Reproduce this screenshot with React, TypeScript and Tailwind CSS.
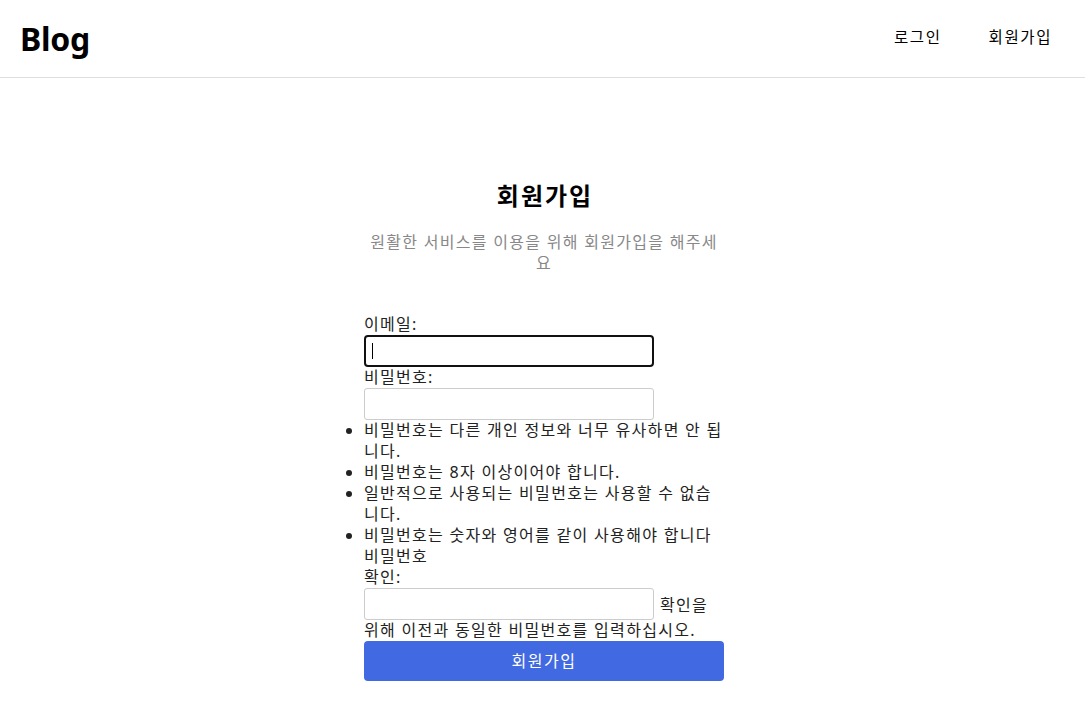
import React from "react";

const font = { fontFamily: '"Noto Sans", "Noto Sans CJK KR", sans-serif' };

export default function App() {
  return (
    <div className="min-h-screen bg-white text-black" style={font}>
      <header className="flex h-[78px] items-center justify-between border-b border-[#dedede] pl-5 pr-[33px]">
        <h1 className="text-[32px] font-bold leading-none tracking-[-0.3px]">Blog</h1>
        <nav className="-mt-[2px] flex gap-[47px] text-[15.5px] leading-[21px] tracking-[1.6px]">
          <a href="#">로그인</a>
          <a href="#">회원가입</a>
        </nav>
      </header>

      <main className="flex justify-center pt-[102px]">
        <div className="ml-[3px] w-[360px]">
          <h2 className="pl-[2px] text-center text-[24px] font-bold leading-[32px] tracking-[2px]">회원가입</h2>
          <p className="mt-[20px] text-center text-[16px] leading-[21px] tracking-[1.3px] text-[#888]">
            원활한 서비스를 이용을 위해 회원가입을 해주세
            <br />요
          </p>

          <form className="mt-[40px] text-[16px] leading-[21px] tracking-[1.3px] text-[#222]">
            <label className="block" htmlFor="email">이메일:</label>
            <div className="relative h-[32px] w-[290px]">
              <input
                id="email"
                type="email"
                readOnly
                className="h-[32px] w-[290px] rounded-[4px] border-2 border-[#111] px-2 outline-none"
              />
              <span className="absolute left-[8px] top-[8px] h-[16px] w-px bg-black" />
            </div>

            <label className="block" htmlFor="password1">비밀번호:</label>
            <input
              id="password1"
              type="password"
              className="block h-[32px] w-[290px] rounded-[3px] border border-[#ccc] px-2 outline-none"
            />

            <ul className="list-outside list-disc pl-0">
              <li className="whitespace-nowrap">
                비밀번호는 다른 개인 정보와 너무 유사하면 안 됩
                <br />니다.
              </li>
              <li className="whitespace-nowrap">비밀번호는 8자 이상이어야 합니다.</li>
              <li className="whitespace-nowrap">
                일반적으로 사용되는 비밀번호는 사용할 수 없습
                <br />니다.
              </li>
              <li className="whitespace-nowrap">비밀번호는 숫자와 영어를 같이 사용해야 합니다</li>
            </ul>

            <label className="block" htmlFor="password2">
              비밀번호
              <br />확인:
            </label>
            <div className="flex items-end">
              <input
                id="password2"
                type="password"
                className="h-[32px] w-[290px] rounded-[3px] border border-[#ccc] px-2 outline-none"
              />
              <span className="mb-[4px] ml-[6px] whitespace-nowrap">확인을</span>
            </div>
            <p className="whitespace-nowrap">위해 이전과 동일한 비밀번호를 입력하십시오.</p>

            <button
              type="button"
              className="h-[40px] w-full rounded-[4px] bg-[#4169e1] text-[16px] tracking-[1.5px] text-white"
            >
              회원가입
            </button>
          </form>
        </div>
      </main>
    </div>
  );
}
